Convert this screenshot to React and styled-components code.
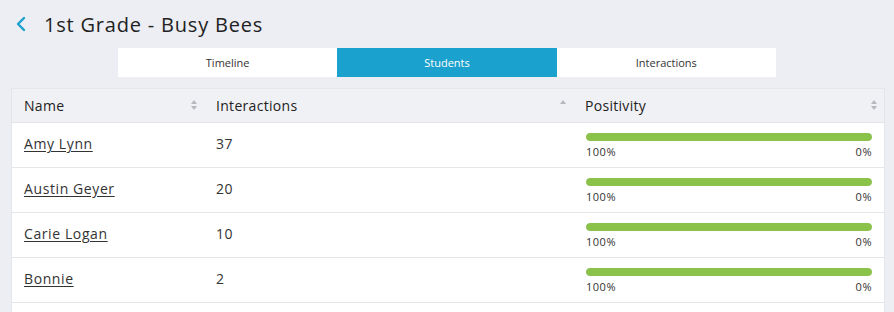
import styled, { createGlobalStyle } from 'styled-components';

const GlobalStyle = createGlobalStyle`
  html, body {
    margin: 0;
    padding: 0;
    background: #eceef3;
    font-family: "Open Sans", "Liberation Sans", sans-serif;
    color: #333;
  }
`;

const Page = styled.div`
  width: 894px;
  height: 312px;
  overflow: hidden;
  box-sizing: border-box;
  padding: 0 9px 0 11px;
`;

const TitleBar = styled.div`
  display: flex;
  align-items: center;
  height: 48px;
  padding-left: 4px;
  gap: 17px;
`;

const BackButton = styled.button`
  border: 0;
  background: none;
  padding: 0;
  display: flex;
  color: #1aa0cc;
  cursor: pointer;
`;

const Title = styled.h1`
  margin: 0;
  font-size: 20px;
  font-weight: 500;
  color: #222;
  letter-spacing: 0.8px;
`;

const Tabs = styled.div`
  display: flex;
  margin: 0 0 0 107px;
  width: 658px;
  height: 29px;
  background: #fff;
`;

const Tab = styled.button`
  flex: 1;
  border: 0;
  padding: 0;
  font-family: "Open Sans", sans-serif;
  font-size: 11px;
  background: ${p => (p.$active ? '#1ba1cd' : '#fff')};
  color: ${p => (p.$active ? '#fff' : '#333')};
  cursor: pointer;
`;

const Table = styled.div`
  margin-top: 11px;
  min-height: 240px;
  border: 1px solid #e4e6ea;
  background: #fff;
`;

const HeaderRow = styled.div`
  display: grid;
  grid-template-columns: 192px 369px 1fr;
  height: 33px;
  align-items: center;
  background: #f0f1f4;
  border-bottom: 1px solid #e2e4e8;
`;

const HeadCell = styled.div`
  display: flex;
  align-items: center;
  justify-content: space-between;
  padding: 0 6px 1px 12px;
  font-size: 14px;
  font-weight: 500;
  color: #222;
  letter-spacing: 0.3px;
`;

const Row = styled.div`
  display: grid;
  grid-template-columns: 192px 369px 1fr;
  height: 44px;
  align-items: center;
  border-bottom: 1px solid #e4e6ea;
`;

const Cell = styled.div`
  padding: 0 12px 3px;
  font-size: 14px;
  color: #333;
  letter-spacing: 0.6px;
`;

const NameLink = styled.a`
  color: #333;
  text-decoration: underline;
  text-underline-offset: 2px;
  cursor: pointer;
`;

const PosCell = styled.div`
  padding: 0 12px 0 13px;
  display: flex;
  flex-direction: column;
  gap: 3px;
  margin-top: 1px;
`;

const Bar = styled.div`
  height: 8px;
  border-radius: 4px;
  background: #e0e3e8;
  overflow: hidden;
`;

const BarFill = styled.div`
  height: 100%;
  background: #8bc34a;
  border-radius: 4px;
`;

const BarLabels = styled.div`
  display: flex;
  justify-content: space-between;
  font-size: 11px;
  letter-spacing: 0.5px;
  color: #333;
`;

const SortIcon = ({ up = true, down = true }) => (
  <svg width="8" height="12" viewBox="0 0 8 12">
    <path d="M4 1 L7 5 H1 Z" fill={up ? '#b4b8bf' : 'transparent'} />
    <path d="M4 11 L7 7 H1 Z" fill={down ? '#b4b8bf' : 'transparent'} />
  </svg>
);

const students = [
  { name: 'Amy Lynn', count: 37, pos: 100 },
  { name: 'Austin Geyer', count: 20, pos: 100 },
  { name: 'Carie Logan', count: 10, pos: 100 },
  { name: 'Bonnie', count: 2, pos: 100 },
];

export default function App() {
  return (
    <>
      <GlobalStyle />
      <Page>
        <TitleBar>
          <BackButton aria-label="Back">
            <svg width="12" height="18" viewBox="0 0 12 18">
              <path d="M9 3 L3 9 L9 15" fill="none" stroke="currentColor" strokeWidth="2.4" strokeLinecap="round" strokeLinejoin="round" />
            </svg>
          </BackButton>
          <Title>1st Grade - Busy Bees</Title>
        </TitleBar>
        <Tabs>
          <Tab>Timeline</Tab>
          <Tab $active>Students</Tab>
          <Tab>Interactions</Tab>
        </Tabs>
        <Table>
          <HeaderRow>
            <HeadCell>Name <SortIcon /></HeadCell>
            <HeadCell>Interactions <SortIcon down={false} /></HeadCell>
            <HeadCell>Positivity <SortIcon /></HeadCell>
          </HeaderRow>
          {students.map(s => (
            <Row key={s.name}>
              <Cell><NameLink>{s.name}</NameLink></Cell>
              <Cell>{s.count}</Cell>
              <PosCell>
                <Bar><BarFill style={{ width: `${s.pos}%` }} /></Bar>
                <BarLabels><span>{s.pos}%</span><span>{100 - s.pos}%</span></BarLabels>
              </PosCell>
            </Row>
          ))}
        </Table>
      </Page>
    </>
  );
}
